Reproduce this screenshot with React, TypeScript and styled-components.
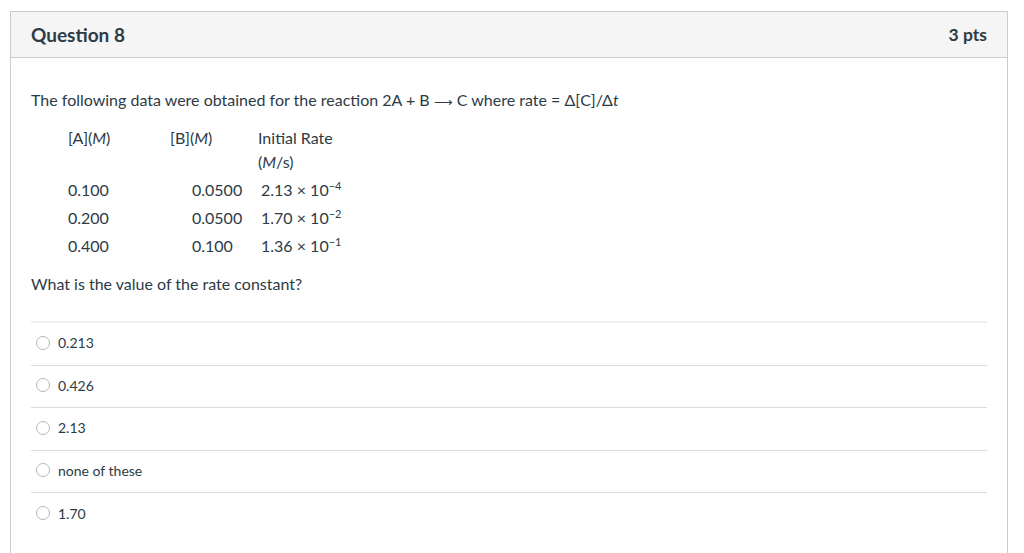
import styled, { createGlobalStyle } from "styled-components";

const GlobalStyle = createGlobalStyle`
  html, body {
    margin: 0;
    padding: 0;
    background: #ffffff;
    font-family: Lato, "Open Sans", sans-serif;
    color: #2d3b45;
  }
`;

const rows = [
  { a: "0.100", b: "0.0500", rate: "2.13", exp: "−4" },
  { a: "0.200", b: "0.0500", rate: "1.70", exp: "−2" },
  { a: "0.400", b: "0.100", rate: "1.36", exp: "−1" },
];

const answers = ["0.213", "0.426", "2.13", "none of these", "1.70"];

export default function App() {
  return (
    <>
      <GlobalStyle />
      <Page>
        <Card>
          <Header>
            <Title>Question 8</Title>
            <Points>3 pts</Points>
          </Header>
          <Body>
            <Prompt>
              The following data were obtained for the reaction 2A + B <Arrow>⟶</Arrow> C where rate = Δ[C]/Δ<i>t</i>
            </Prompt>
            <DataTable>
              <thead>
                <tr>
                  <HeadCell>[A](<i>M</i>)</HeadCell>
                  <HeadCell>[B](<i>M</i>)</HeadCell>
                  <HeadCell>
                    Initial Rate
                    <br />(<i>M</i>/s)
                  </HeadCell>
                </tr>
              </thead>
              <tbody>
                {rows.map((r) => (
                  <tr key={r.a}>
                    <Cell>{r.a}</Cell>
                    <Cell $indent>{r.b}</Cell>
                    <Cell>
                      {r.rate} × 10<sup>{r.exp}</sup>
                    </Cell>
                  </tr>
                ))}
              </tbody>
            </DataTable>
            <Prompt>What is the value of the rate constant?</Prompt>
            <AnswerList>
              {answers.map((a) => (
                <Answer key={a}>
                  <Radio />
                  <AnswerText>{a}</AnswerText>
                </Answer>
              ))}
            </AnswerList>
          </Body>
        </Card>
      </Page>
    </>
  );
}

const Page = styled.div`
  padding: 11px 16px 0 10px;
  height: 553px;
  box-sizing: border-box;
  overflow: hidden;
`;

const Card = styled.div`
  border: 1px solid #c7cdd1;
  border-bottom: none;
  min-height: 560px;
`;

const Header = styled.div`
  display: flex;
  justify-content: space-between;
  align-items: center;
  height: 45px;
  padding: 0 20px;
  background: #f5f5f5;
  border-bottom: 1px solid #c7cdd1;
`;

const Title = styled.div`
  font-size: 19px;
  font-weight: 700;
`;

const Points = styled.div`
  font-size: 17.5px;
  font-weight: 700;
`;

const Body = styled.div`
  padding: 30px 20px 0;
`;

const Prompt = styled.p`
  margin: 0;
  font-size: 16px;
  line-height: 24px;
`;

const Arrow = styled.span`
  font-size: 13px;
  vertical-align: -1px;
`;

const DataTable = styled.table`
  margin: 12px 0 12px 37px;
  border-collapse: collapse;
  font-size: 16px;

  sup {
    font-size: 11px;
    vertical-align: 6px;
    line-height: 0;
  }
`;

const HeadCell = styled.th`
  text-align: left;
  font-weight: 400;
  vertical-align: top;
  line-height: 24px;
  padding: 0 0 2px 0;
  &:first-child {
    width: 102px;
  }
  &:nth-child(2) {
    width: 88px;
  }
`;

const Cell = styled.td<{ $indent?: boolean }>`
  line-height: 24px;
  padding: 2px 4px 2px ${(p) => (p.$indent ? "22px" : "0")};
  &:last-child {
    padding-left: 3px;
  }
`;

const AnswerList = styled.div`
  margin-top: 25px;
  border-top: 2px solid #eeeeee;
`;

const Answer = styled.label`
  display: flex;
  align-items: center;
  gap: 8px;
  height: 41.5px;
  padding: 0 0 2px 5px;
  box-sizing: border-box;
  height: 42.5px;
  border-bottom: 1px solid #dadcdf;
  &:last-child {
    border-bottom: none;
  }
`;

const Radio = styled.span`
  width: 12px;
  height: 12px;
  border-radius: 50%;
  border: 1px solid #b5b8bb;
  background: #fff;
  flex-shrink: 0;
`;

const AnswerText = styled.span`
  font-size: 14px;
`;
